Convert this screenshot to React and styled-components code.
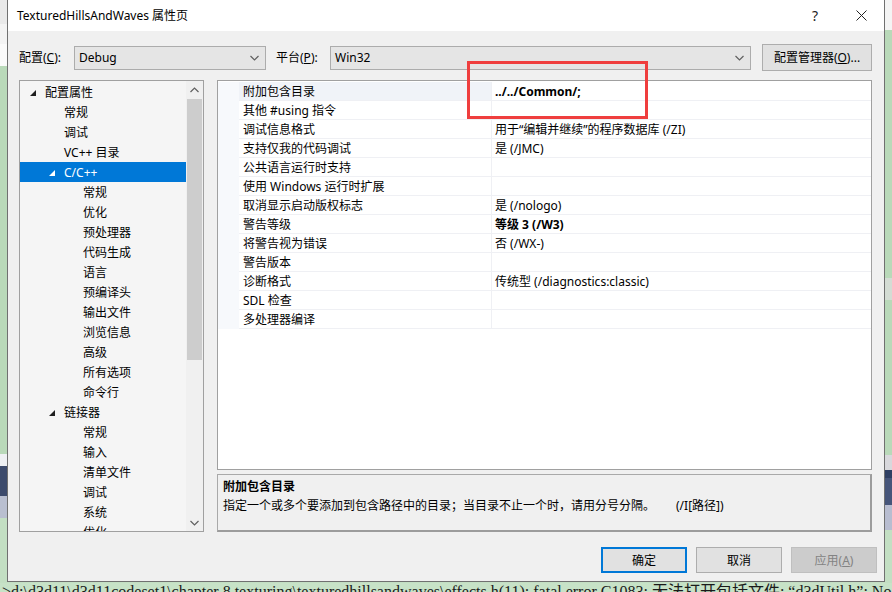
import React from "react";
import styled, { createGlobalStyle } from "styled-components";

const Global = createGlobalStyle`
  html, body { margin: 0; padding: 0; }
  body {
    width: 892px; height: 592px; overflow: hidden;
    background: #c3dfc3;
    font-family: "Noto Sans", "Noto Sans CJK SC", sans-serif;
    font-size: 12px;
    color: #000;
  }
  * { box-sizing: border-box; }
`;

const FONT = `"Noto Sans", "Noto Sans CJK SC", sans-serif`;

const Screen = styled.div`
  width: 892px;
  height: 592px;
  overflow: hidden;
  display: grid;
  grid-template-columns: 7px 878px 7px;
  grid-template-rows: 582px 10px;
  background: #c3dfc3;
`;

const SideStrip = styled.div`
  display: flex;
  flex-direction: column;
  overflow: hidden;
`;

const StripBlock = styled.div`
  height: ${(p) => p.h}px;
  background: ${(p) => p.bg};
  flex: ${(p) => (p.grow ? 1 : "none")};
`;

const OutputLine = styled.div`
  grid-column: 1 / -1;
  font-family: "Liberation Serif", "Noto Sans CJK SC", serif;
  font-size: 16px;
  line-height: 18px;
  white-space: nowrap;
  padding-left: 2px;
  margin-top: 1px;
  color: #1a1a1a;
  background: #c7e2c7;
`;

const Dialog = styled.div`
  position: relative;
  background: #f0f0f0;
  border-left: 1px solid #707070;
  border-right: 1px solid #707070;
  border-bottom: 1px solid #707070;
  display: flex;
  flex-direction: column;
  font-family: ${FONT};
`;

const TitleBar = styled.div`
  height: 31px;
  background: #fff;
  display: flex;
  align-items: center;
  padding-left: 9px;
`;

const TitleText = styled.div`
  font-size: 12px;
  line-height: 16px;
  padding-top: 1px;
  flex: 1;
`;

const CaptionButton = styled.div`
  width: 46px;
  height: 31px;
  display: flex;
  align-items: center;
  justify-content: center;
  font-size: 14px;
  color: #222;
`;

const ConfigRow = styled.div`
  margin-top: 13px;
  height: 27px;
  display: flex;
  align-items: center;
  padding: 0 12px 0 11px;
`;

const Label = styled.div`
  width: ${(p) => p.w}px;
  margin-left: ${(p) => p.ml || 0}px;
  line-height: 16px;
  padding-top: 1px;
  white-space: nowrap;
`;

const Select = styled.div`
  width: ${(p) => p.w}px;
  height: 24px;
  border: 1px solid #acacac;
  background: #e5e5e5;
  display: flex;
  align-items: center;
  justify-content: space-between;
  padding: 1px 6px 0 4px;
  line-height: 16px;
`;

const PushButton = styled.div`
  width: ${(p) => p.w}px;
  height: ${(p) => p.h || 26}px;
  margin-left: ${(p) => p.ml || 0}px;
  display: flex;
  align-items: center;
  justify-content: center;
  padding-top: 1px;
  background: ${(p) => (p.disabled ? "#cccccc" : "#e1e1e1")};
  border: ${(p) =>
    p.primary ? "2px solid #0078d7" : p.disabled ? "1px solid #bfbfbf" : "1px solid #adadad"};
  color: ${(p) => (p.disabled ? "#838383" : "#000")};
  line-height: 16px;
  white-space: nowrap;
`;

const Main = styled.div`
  margin-top: 9px;
  height: 452px;
  display: flex;
  padding: 0 12px 0 11px;
`;

const TreePanel = styled.div`
  width: 185px;
  border: 1px solid #a0a0a0;
  background: #f5f5f5;
  display: flex;
  overflow: hidden;
`;

const TreeList = styled.div`
  flex: 1;
  overflow: hidden;
  padding-top: 1px;
`;

const TreeRow = styled.div`
  height: 20px;
  display: flex;
  align-items: center;
  padding-left: ${(p) => 10 + p.level * 19}px;
  padding-top: 1px;
  background: ${(p) => (p.selected ? "#0078d7" : "transparent")};
  color: ${(p) => (p.selected ? "#fff" : "#000")};
  line-height: 16px;
  white-space: nowrap;
`;

const Expander = styled.div`
  width: 15px;
  height: 18px;
  display: flex;
  align-items: center;
`;

const ScrollBar = styled.div`
  width: 17px;
  background: #f0f0f0;
  display: flex;
  flex-direction: column;
`;

const ScrollArrow = styled.div`
  height: 17px;
  display: flex;
  align-items: center;
  justify-content: center;
`;

const ScrollThumb = styled.div`
  height: 261px;
  margin: 1px 1px 0 1px;
  background: #cdcdcd;
`;

const ScrollTrack = styled.div`
  flex: 1;
`;

const RightColumn = styled.div`
  margin-left: 13px;
  width: 655px;
  display: flex;
  flex-direction: column;
`;

const Grid = styled.div`
  height: 390px;
  border: 1px solid #a0a0a0;
  background: #fff;
  display: flex;
  flex-direction: column;
  padding-top: 1px;
`;

const GridRow = styled.div`
  display: grid;
  grid-template-columns: 21px 253px 1fr;
  height: 19px;
`;

const Gutter = styled.div`
  background: #f7f9fc;
`;

const Cell = styled.div`
  border-bottom: 1px solid #eff0f4;
  border-right: ${(p) => (p.name ? "1px solid #eff0f4" : "none")};
  background: ${(p) => (p.active ? "#f0f3f8" : "#fff")};
  padding-left: ${(p) => (p.name ? 4 : 3)}px;
  padding-top: 1px;
  display: flex;
  align-items: center;
  font-weight: ${(p) => (p.bold ? 700 : 400)};
  line-height: 16px;
  white-space: nowrap;
  overflow: hidden;
`;

const Description = styled.div`
  margin-top: 4px;
  height: 58px;
  border: 1px solid #a9a9a9;
  border-right: 2px solid #9c9c9c;
  border-bottom: 2px solid #9c9c9c;
  background: #f0f0f0;
  padding: 3px 5px 0;
`;

const DescTitle = styled.div`
  font-weight: 700;
  line-height: 18px;
  height: 19px;
`;

const DescText = styled.div`
  line-height: 18px;
  white-space: nowrap;
`;

const Switch = styled.span`
  margin-left: 21px;
`;

const Footer = styled.div`
  margin-top: 15px;
  display: flex;
  justify-content: flex-end;
  gap: 9px;
  padding-right: 7px;
`;

const Annotation = styled.div`
  position: absolute;
  left: 459px;
  top: 61px;
  width: 181px;
  height: 58px;
  border: 3px solid #ef3e3e;
  pointer-events: none;
`;

const Chevron = ({ up, color = "#606060", w = 9 }) => (
  <svg width={w} height="6" viewBox="0 0 9 6">
    <polyline
      points={up ? "0.5,5 4.5,1 8.5,5" : "0.5,1 4.5,5 8.5,1"}
      fill="none"
      stroke={color}
      strokeWidth="1.2"
    />
  </svg>
);

const Tri = ({ color }) => (
  <svg width="6" height="6" viewBox="0 0 6 6">
    <polygon points="6,0 6,6 0,6" fill={color} />
  </svg>
);

const tree = [
  { t: "配置属性", l: 0, e: true },
  { t: "常规", l: 1 },
  { t: "调试", l: 1 },
  { t: "VC++ 目录", l: 1 },
  { t: "C/C++", l: 1, e: true, s: true },
  { t: "常规", l: 2 },
  { t: "优化", l: 2 },
  { t: "预处理器", l: 2 },
  { t: "代码生成", l: 2 },
  { t: "语言", l: 2 },
  { t: "预编译头", l: 2 },
  { t: "输出文件", l: 2 },
  { t: "浏览信息", l: 2 },
  { t: "高级", l: 2 },
  { t: "所有选项", l: 2 },
  { t: "命令行", l: 2 },
  { t: "链接器", l: 1, e: true },
  { t: "常规", l: 2 },
  { t: "输入", l: 2 },
  { t: "清单文件", l: 2 },
  { t: "调试", l: 2 },
  { t: "系统", l: 2 },
  { t: "优化", l: 2 },
];

const props = [
  { n: "附加包含目录", v: "../../Common/;", b: true, a: true },
  { n: "其他 #using 指令", v: "" },
  { n: "调试信息格式", v: "用于“编辑并继续”的程序数据库 (/ZI)" },
  { n: "支持仅我的代码调试", v: "是 (/JMC)" },
  { n: "公共语言运行时支持", v: "" },
  { n: "使用 Windows 运行时扩展", v: "" },
  { n: "取消显示启动版权标志", v: "是 (/nologo)" },
  { n: "警告等级", v: "等级 3 (/W3)", b: true },
  { n: "将警告视为错误", v: "否 (/WX-)" },
  { n: "警告版本", v: "" },
  { n: "诊断格式", v: "传统型 (/diagnostics:classic)" },
  { n: "SDL 检查", v: "" },
  { n: "多处理器编译", v: "" },
];

export default function App() {
  return (
    <>
      <Global />
      <Screen>
        <SideStrip>
          <StripBlock h={24} bg="#e9e9e9" />
          <StripBlock h={20} bg="#f3f3f3" />
          <StripBlock h={22} bg="#fafafa" />
          <StripBlock h={388} bg="#b9d9b9" />
          <StripBlock h={12} bg="#eef0f3" />
          <StripBlock h={30} bg="#3d4b6c" />
          <StripBlock h={22} bg="#b9bfd0" />
          <StripBlock grow bg="#c3dfc3" />
        </SideStrip>
        <Dialog>
          <TitleBar>
            <TitleText>TexturedHillsAndWaves 属性页</TitleText>
            <CaptionButton>?</CaptionButton>
            <CaptionButton>
              <svg width="11" height="11" viewBox="0 0 11 11">
                <path d="M0.5 0.5 L10.5 10.5 M10.5 0.5 L0.5 10.5" stroke="#222" strokeWidth="1" />
              </svg>
            </CaptionButton>
          </TitleBar>

          <ConfigRow>
            <Label w={55}>
              配置(<u>C</u>):
            </Label>
            <Select w={192}>
              <span>Debug</span>
              <Chevron />
            </Select>
            <Label w={54} ml={10}>
              平台(<u>P</u>):
            </Label>
            <Select w={421}>
              <span>Win32</span>
              <Chevron />
            </Select>
            <PushButton w={110} h={27} ml={11}>
              配置管理器(<u>O</u>)...
            </PushButton>
          </ConfigRow>

          <Main>
            <TreePanel>
              <TreeList>
                {tree.map((it, i) => (
                  <TreeRow key={i} level={it.l} selected={it.s}>
                    {it.l < 2 && (
                      <Expander>{it.e && <Tri color={it.s ? "#fff" : "#1e1e1e"} />}</Expander>
                    )}
                    {it.l === 2 && <Expander />}
                    <span>{it.t}</span>
                  </TreeRow>
                ))}
              </TreeList>
              <ScrollBar>
                <ScrollArrow>
                  <Chevron up w={9} />
                </ScrollArrow>
                <ScrollThumb />
                <ScrollTrack />
                <ScrollArrow>
                  <Chevron w={9} />
                </ScrollArrow>
              </ScrollBar>
            </TreePanel>

            <RightColumn>
              <Grid>
                {props.map((p, i) => (
                  <GridRow key={i}>
                    <Gutter />
                    <Cell name active={p.a}>
                      {p.n}
                    </Cell>
                    <Cell bold={p.b}>{p.v}</Cell>
                  </GridRow>
                ))}
              </Grid>
              <Description>
                <DescTitle>附加包含目录</DescTitle>
                <DescText>
                  指定一个或多个要添加到包含路径中的目录；当目录不止一个时，请用分号分隔。
                  <Switch>(/I[路径])</Switch>
                </DescText>
              </Description>
            </RightColumn>
          </Main>

          <Footer>
            <PushButton w={86} primary>
              确定
            </PushButton>
            <PushButton w={86}>取消</PushButton>
            <PushButton w={86} disabled>
              应用(<u>A</u>)
            </PushButton>
          </Footer>

          <Annotation />
        </Dialog>
        <SideStrip>
          <StripBlock h={30} bg="#f4f4f4" />
          <StripBlock h={248} bg="#b9d9b9" />
          <StripBlock h={22} bg="#d4dcd4" />
          <StripBlock h={155} bg="#b9d9b9" />
          <StripBlock h={15} bg="#d8d8dc" />
          <StripBlock h={8} bg="#2f3f63" />
          <StripBlock h={27} bg="#46557a" />
          <StripBlock h={25} bg="#b8bdd0" />
          <StripBlock grow bg="#c3dfc3" />
        </SideStrip>
        <OutputLine>
          &gt;d:\d3d11\d3d11codeset1\chapter 8 texturing\texturedhillsandwaves\effects.h(11): fatal error C1083: 无法打开包括文件: “d3dUtil.h”: No such file or directory
        </OutputLine>
      </Screen>
    </>
  );
}
